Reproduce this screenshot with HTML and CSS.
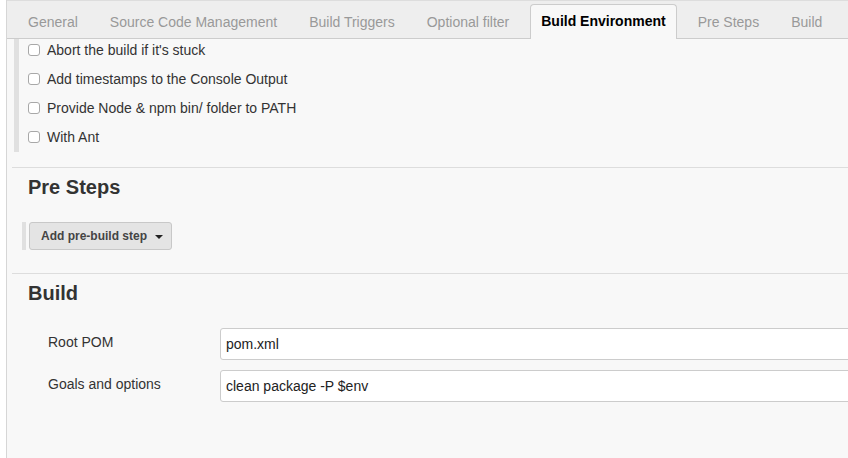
FILE: index.html
```html
<!DOCTYPE html>
<html>
<head>
<meta charset="utf-8">
<link rel="stylesheet" href="styles.css">
</head>
<body>
    <div class="page">
        <div class="tabbar">
            <span class="tab">General</span>
            <span class="tab">Source Code Management</span>
            <span class="tab">Build Triggers</span>
            <span class="tab">Optional filter</span>
            <span class="tab active">Build Environment</span>
            <span class="tab">Pre Steps</span>
            <span class="tab">Build</span>
        </div>

        <div class="env">
            <label class="check"><input type="checkbox"> Abort the build if it's stuck</label>
            <label class="check"><input type="checkbox"> Add timestamps to the Console Output</label>
            <label class="check"><input type="checkbox"> Provide Node &amp; npm bin/ folder to PATH</label>
            <label class="check"><input type="checkbox"> With Ant</label>
        </div>

        <div class="section">
            <h2>Pre Steps</h2>
            <div class="btn-wrap">
                <button class="btn">Add pre-build step <span class="caret"></span></button>
            </div>
        </div>

        <div class="section build">
            <h2>Build</h2>
            <div class="field">
                <span class="label">Root POM</span>
                <input class="text" type="text" value="pom.xml">
            </div>
            <div class="field">
                <span class="label">Goals and options</span>
                <input class="text" type="text" value="clean package -P $env">
            </div>
        </div>
    </div>
</body>
</html>
```

FILE: styles.css
```css
html, body {
    margin: 0;
    padding: 0;
    background: #fff;
    font-family: "Liberation Sans", Arial, sans-serif;
    color: #333;
}
.page {
    margin-left: 6px;
    border-left: 1px solid #d6d6d6;
    background: #f8f8f8;
    height: 458px;
    overflow: hidden;
}
.tabbar {
    height: 37px;
    background: #eee;
    border-top: 1px solid #ddd;
    border-bottom: 1px solid #ccc;
    display: flex;
    align-items: flex-end;
    padding-left: 10px;
    white-space: nowrap;
}
.tab {
    font-size: 14px;
    color: #999;
    padding: 0 10px;
    height: 33px;
    line-height: 33px;
    border: 1px solid transparent;
    border-bottom: none;
    margin-right: 10px;
    margin-bottom: -1px;
}
.tab.active {
    background: #f8f8f8;
    border-color: #ccc;
    border-radius: 4px 4px 0 0;
    color: #000;
    font-weight: bold;
    height: 34px;
    line-height: 33px;
}
.env {
    margin-left: 7px;
    border-left: 5px solid #e0e0e0;
    padding: 0 0 4px 9px;
}
.check {
    display: flex;
    align-items: center;
    height: 22px;
    margin-bottom: 7px;
    font-size: 14px;
}
.check:last-child {
    margin-bottom: 0;
}
.check input {
    -webkit-appearance: none;
    appearance: none;
    width: 12px;
    height: 12px;
    margin: 0 7px 0 0;
    border: 1px solid #a8a8a8;
    border-radius: 3px;
    background: #fff;
}
.section {
    margin-left: 5px;
    margin-top: 15px;
    border-top: 1px solid #ddd;
    padding-left: 16px;
}
.section.build {
    margin-top: 23px;
}
.section h2 {
    margin: 0;
    padding-top: 7px;
    font-size: 20px;
    line-height: 24px;
    font-weight: bold;
    color: #333;
}
.btn-wrap {
    margin: 23px 0 0 -6px;
    border-left: 4px solid #e0e0e0;
    padding-left: 3px;
    display: inline-block;
}
.btn {
    display: block;
    height: 28px;
    width: 143px;
    background: #e4e4e4;
    border: 1px solid #c8c8c8;
    border-radius: 3px;
    font-family: "Liberation Sans", Arial, sans-serif;
    font-size: 12px;
    font-weight: bold;
    color: #444;
    padding: 0 0 0 11px;
    text-align: left;
}
.caret {
    display: inline-block;
    width: 0;
    height: 0;
    border-left: 4px solid transparent;
    border-right: 4px solid transparent;
    border-top: 4px solid #222;
    margin-left: 5px;
    vertical-align: middle;
}
.field {
    display: flex;
    align-items: center;
    margin-top: 10px;
    padding-left: 20px;
}
.section h2 + .field {
    margin-top: 23px;
}
.label {
    width: 172px;
    flex-shrink: 0;
    font-size: 14px;
    margin-top: -5px;
}
.text {
    flex: 1;
    height: 32px;
    box-sizing: border-box;
    margin-right: -10px;
    border: 1px solid #ccc;
    border-radius: 3px;
    background: #fff;
    font-family: "Liberation Sans", Arial, sans-serif;
    font-size: 14px;
    color: #222;
    padding: 0 5px;
}
```
